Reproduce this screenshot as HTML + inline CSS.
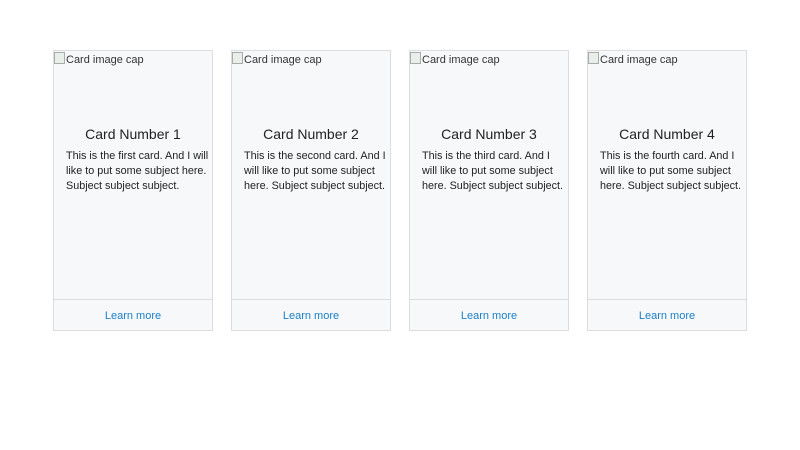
<!DOCTYPE html>
<html><head><style>
body{margin:0;background:#fff;font-family:"Liberation Sans",sans-serif;}
.card{position:absolute;top:50px;width:158px;height:279px;border:1px solid #dcdde0;background:#f7f8fa;box-sizing:content-box;}
.cap{position:absolute;left:0;top:1px;font-size:11px;color:#333;white-space:nowrap;}
.cap i{display:inline-block;width:9px;height:10px;border:1px solid #aaa;vertical-align:-1px;margin-right:1px;background:#e8efe8;}
.t{position:absolute;top:75px;left:0;width:100%;text-align:center;font-size:14px;color:#222;}
.b{position:absolute;top:98px;left:12px;font-size:10.8px;line-height:15px;color:#222;white-space:nowrap;}
.f{position:absolute;left:0;right:0;bottom:0;height:30px;border-top:1px solid #dcdde0;text-align:center;line-height:32px;font-size:11px;color:#1a7fc9;}
</style></head><body>
<div class="card" style="left:53px"><div class="cap"><i></i>Card image cap</div><div class="t">Card Number 1</div><div class="b">This is the first card. And I will<br>like to put some subject here.<br>Subject subject subject.</div><div class="f">Learn more</div></div>
<div class="card" style="left:231px"><div class="cap"><i></i>Card image cap</div><div class="t">Card Number 2</div><div class="b">This is the second card. And I<br>will like to put some subject<br>here. Subject subject subject.</div><div class="f">Learn more</div></div>
<div class="card" style="left:409px"><div class="cap"><i></i>Card image cap</div><div class="t">Card Number 3</div><div class="b">This is the third card. And I<br>will like to put some subject<br>here. Subject subject subject.</div><div class="f">Learn more</div></div>
<div class="card" style="left:587px"><div class="cap"><i></i>Card image cap</div><div class="t">Card Number 4</div><div class="b">This is the fourth card. And I<br>will like to put some subject<br>here. Subject subject subject.</div><div class="f">Learn more</div></div>
</body></html>
